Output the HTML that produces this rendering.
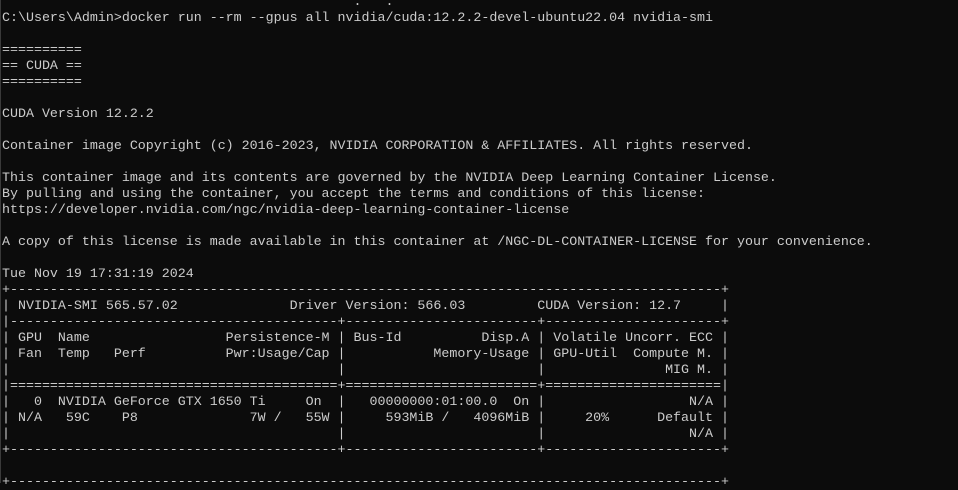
<!DOCTYPE html>
<html><head><meta charset="utf-8"><style>
html,body{margin:0;padding:0;background:#0c0c0c;width:958px;height:483px;overflow:hidden}
pre{position:absolute;left:2px;top:-6px;margin:0;font-family:"Liberation Mono",monospace;font-size:13.32px;line-height:16px;color:#cccccc;white-space:pre}
.edge{position:absolute;left:0;top:0;width:1px;height:483px;background:#3a3a3a}
</style></head><body>
<div class="edge"></div>
<pre>                                            .   .
C:\Users\Admin&gt;docker run --rm --gpus all nvidia/cuda:12.2.2-devel-ubuntu22.04 nvidia-smi

==========
== CUDA ==
==========

CUDA Version 12.2.2

Container image Copyright (c) 2016-2023, NVIDIA CORPORATION &amp; AFFILIATES. All rights reserved.

This container image and its contents are governed by the NVIDIA Deep Learning Container License.
By pulling and using the container, you accept the terms and conditions of this license:
https://developer.nvidia.com/ngc/nvidia-deep-learning-container-license

A copy of this license is made available in this container at /NGC-DL-CONTAINER-LICENSE for your convenience.

Tue Nov 19 17:31:19 2024
+-----------------------------------------------------------------------------------------+
| NVIDIA-SMI 565.57.02              Driver Version: 566.03         CUDA Version: 12.7     |
|-----------------------------------------+------------------------+----------------------+
| GPU  Name                 Persistence-M | Bus-Id          Disp.A | Volatile Uncorr. ECC |
| Fan  Temp   Perf          Pwr:Usage/Cap |           Memory-Usage | GPU-Util  Compute M. |
|                                         |                        |               MIG M. |
|=========================================+========================+======================|
|   0  NVIDIA GeForce GTX 1650 Ti     On  |   00000000:01:00.0  On |                  N/A |
| N/A   59C    P8              7W /   55W |     593MiB /   4096MiB |     20%      Default |
|                                         |                        |                  N/A |
+-----------------------------------------+------------------------+----------------------+

+-----------------------------------------------------------------------------------------+
</pre>
</body></html>
